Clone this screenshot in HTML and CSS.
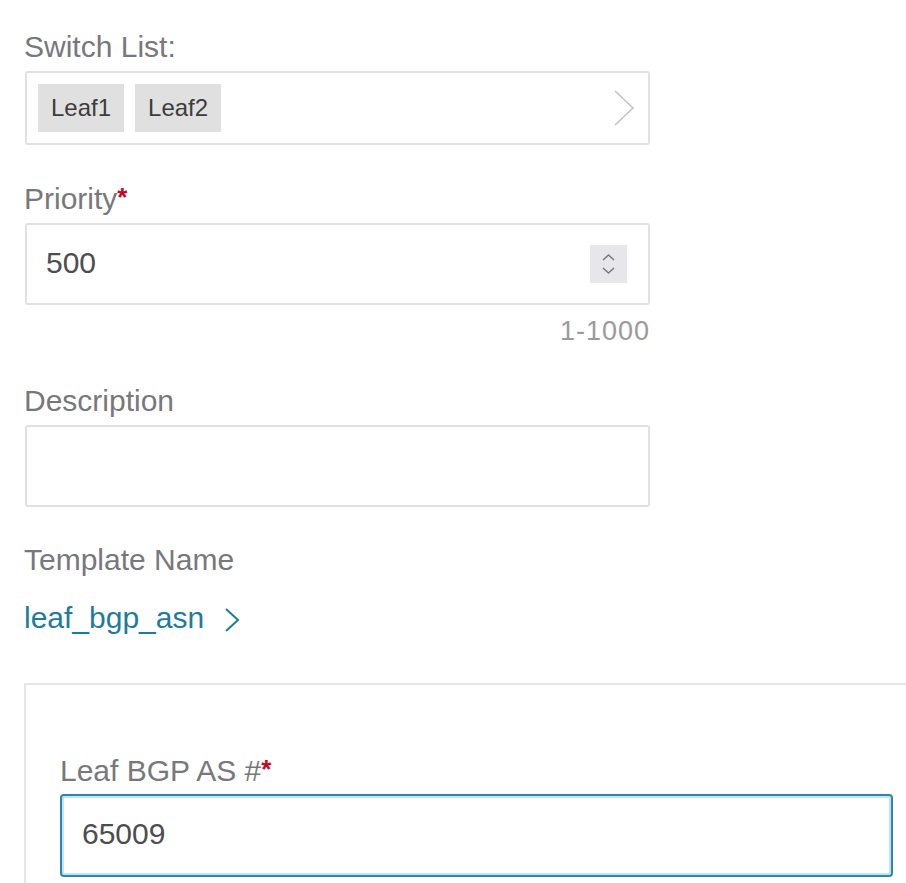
FILE: index.html
```html
<!DOCTYPE html>
<html lang="en">
<head>
<meta charset="utf-8">
<title>Form</title>
<link rel="stylesheet" href="styles.css">
</head>
<body>
<div class="page">
  <div class="form">
    <div class="label">Switch List:</div>
    <div class="box select-box">
      <span class="tag">Leaf1</span>
      <span class="tag">Leaf2</span>
      <svg class="select-chevron" width="22" height="38" viewBox="0 0 22 38"><path d="M2 2 L20 19 L2 36" fill="none" stroke="#c4c4c4" stroke-width="1.6"/></svg>
    </div>

    <div class="label gap-34">Priority<span class="req">*</span></div>
    <div class="box input-box">
      <span class="value">500</span>
      <span class="spinner">
        <svg width="37" height="38" viewBox="0 0 37 38"><path d="M13 15 L18.5 10 L24 15" fill="none" stroke="#7a7a7e" stroke-width="1.6"/><path d="M13 23 L18.5 28 L24 23" fill="none" stroke="#7a7a7e" stroke-width="1.6"/></svg>
      </span>
    </div>
    <div class="hint">1-1000</div>

    <div class="label gap-36">Description</div>
    <div class="box input-box"></div>

    <div class="label gap-35">Template Name</div>
    <a class="link">leaf_bgp_asn<svg class="link-chevron" width="18" height="26" viewBox="0 0 18 26"><path d="M3 2 L15 13 L3 24" fill="none" stroke="#1d7c9b" stroke-width="2"/></svg></a>
  </div>

  <div class="panel">
    <div class="label panel-label">Leaf BGP AS #<span class="req">*</span></div>
    <div class="focus-input"><span class="value">65009</span></div>
  </div>
</div>
</body>
</html>
```

FILE: styles.css
```css
html, body {
  margin: 0;
  padding: 0;
  background: #ffffff;
  overflow: hidden;
}

body {
  font-family: "Liberation Sans", Arial, sans-serif;
  width: 906px;
  height: 883px;
}

.page {
  padding: 29px 0 0 24px;
}

.form {
  width: 626px;
  display: flex;
  flex-direction: column;
}

.label {
  font-size: 30px;
  line-height: 36px;
  color: #77787c;
  margin-bottom: 6px;
}

.req {
  color: #d0021b;
  font-size: 26px;
  font-weight: bold;
  vertical-align: 3px;
}

.gap-34 { margin-top: 34px; }
.gap-35 { margin-top: 35px; }
.gap-36 { margin-top: 36px; }

.box {
  box-sizing: border-box;
  border: 2px solid #e1e1e3;
  border-radius: 3px;
  margin-left: 1px;
}

.select-box {
  height: 74px;
  display: flex;
  align-items: center;
  gap: 11px;
  padding: 0 13px 0 11px;
}

.tag {
  height: 48px;
  line-height: 48px;
  padding: 0 13px;
  background: #e0e0e0;
  color: #3c3c3c;
  font-size: 24px;
}

.select-chevron {
  margin-left: auto;
}

.input-box {
  height: 82px;
  display: flex;
  align-items: center;
  padding: 0 21px 0 19px;
}

.value {
  font-size: 30px;
  color: #4d4d4f;
  margin-top: -3px;
}

.spinner {
  margin-left: auto;
  width: 37px;
  height: 38px;
  background: #e7e7eb;
  display: flex;
}

.hint {
  margin-top: 10px;
  font-size: 27px;
  line-height: 32px;
  letter-spacing: 1px;
  color: #9a9a9e;
  text-align: right;
}

.link {
  margin-top: 16px;
  font-size: 30px;
  line-height: 36px;
  color: #1d7c9b;
  display: flex;
  align-items: center;
  gap: 19px;
}

.link-chevron {
  margin-top: 4px;
}

.panel {
  margin-top: 47px;
  width: 920px;
  height: 300px;
  border-top: 2px solid #e6e6e8;
  border-left: 2px solid #e6e6e8;
  padding: 66px 0 0 34px;
}

.panel-label {
  margin-bottom: 5px;
}

.focus-input {
  box-sizing: border-box;
  width: 833px;
  height: 83px;
  border: 2px solid #2d86ae;
  border-radius: 4px;
  box-shadow: inset 0 0 0 2px #c6e3f1;
  display: flex;
  align-items: center;
  padding: 0 20px;
}
```
